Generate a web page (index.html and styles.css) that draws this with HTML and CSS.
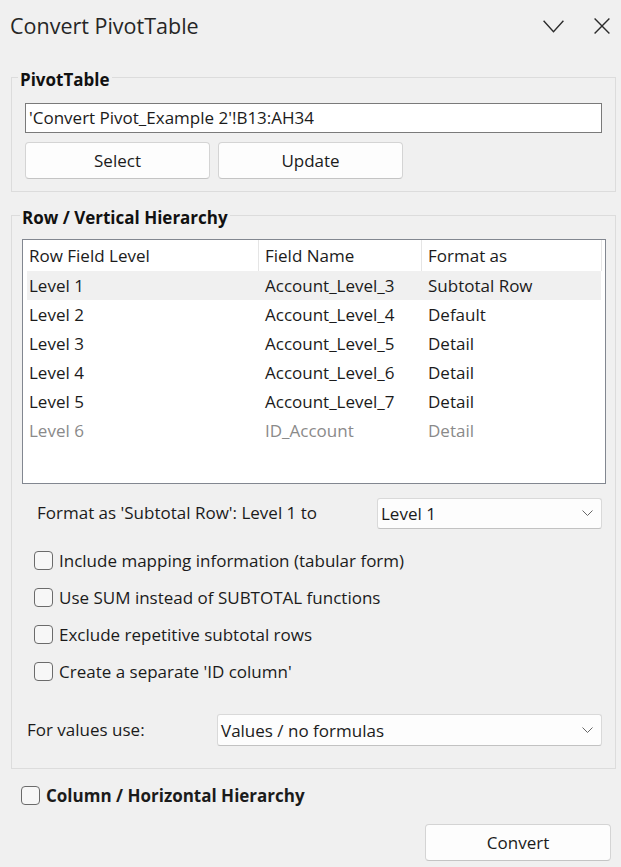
FILE: index.html
```html
<!DOCTYPE html>
<html lang="en">
<head>
<meta charset="utf-8">
<title>Convert PivotTable</title>
<link rel="stylesheet" href="styles.css">
</head>
<body>
<div class="pane">
  <header class="titlebar">
    <h1 class="title">Convert PivotTable</h1>
    <div class="title-actions">
      <svg class="ico ico-chev" width="21" height="13" viewBox="0 0 21 13"><path d="M0.6 0.8 L10.5 11.6 L20.4 0.8" fill="none" stroke="#2b2b2b" stroke-width="1.4"/></svg>
      <svg class="ico ico-close" width="16" height="16" viewBox="0 0 16 16"><path d="M0.6 0.6 L15.4 15.4 M15.4 0.6 L0.6 15.4" fill="none" stroke="#2b2b2b" stroke-width="1.4"/></svg>
    </div>
  </header>

  <fieldset class="group group-pivot">
    <legend class="legend">PivotTable</legend>
    <div class="textbox">'Convert Pivot_Example 2'!B13:AH34</div>
    <div class="btn-row">
      <button class="btn">Select</button>
      <button class="btn">Update</button>
    </div>
  </fieldset>

  <fieldset class="group group-rows">
    <legend class="legend">Row / Vertical Hierarchy</legend>
    <div class="listbox">
      <div class="lv-row lv-head">
        <div class="c1">Row Field Level</div>
        <div class="c2">Field Name</div>
        <div class="c3">Format as</div>
      </div>
      <div class="lv-row sel">
        <div class="c1">Level 1</div><div class="c2">Account_Level_3</div><div class="c3">Subtotal Row</div>
      </div>
      <div class="lv-row">
        <div class="c1">Level 2</div><div class="c2">Account_Level_4</div><div class="c3">Default</div>
      </div>
      <div class="lv-row">
        <div class="c1">Level 3</div><div class="c2">Account_Level_5</div><div class="c3">Detail</div>
      </div>
      <div class="lv-row">
        <div class="c1">Level 4</div><div class="c2">Account_Level_6</div><div class="c3">Detail</div>
      </div>
      <div class="lv-row">
        <div class="c1">Level 5</div><div class="c2">Account_Level_7</div><div class="c3">Detail</div>
      </div>
      <div class="lv-row dim">
        <div class="c1">Level 6</div><div class="c2">ID_Account</div><div class="c3">Detail</div>
      </div>
    </div>

    <div class="subtotal-row">
      <span class="subtotal-label">Format as 'Subtotal Row': Level 1 to</span>
      <div class="combo combo-level"><span>Level 1</span><svg class="chev" width="11" height="7" viewBox="0 0 11 7"><path d="M0.5 0.5 L5.5 5.5 L10.5 0.5" fill="none" stroke="#666" stroke-width="1"/></svg></div>
    </div>

    <div class="checks">
      <label class="check"><span class="box"></span>Include mapping information (tabular form)</label>
      <label class="check"><span class="box"></span>Use SUM instead of SUBTOTAL functions</label>
      <label class="check"><span class="box"></span>Exclude repetitive subtotal rows</label>
      <label class="check"><span class="box"></span>Create a separate 'ID column'</label>
    </div>

    <div class="values-row">
      <span class="values-label">For values use:</span>
      <div class="combo combo-values"><span>Values / no formulas</span><svg class="chev" width="11" height="7" viewBox="0 0 11 7"><path d="M0.5 0.5 L5.5 5.5 L10.5 0.5" fill="none" stroke="#666" stroke-width="1"/></svg></div>
    </div>
  </fieldset>

  <label class="check check-col"><span class="box"></span>Column / Horizontal Hierarchy</label>

  <div class="footer">
    <button class="btn btn-convert">Convert</button>
  </div>
</div>
</body>
</html>
```

FILE: styles.css
```css
* { box-sizing: border-box; }
html, body {
  margin: 0;
  padding: 0;
  background: #f0f0f0;
}
body {
  font-family: "Open Sans", "Noto Sans", "DejaVu Sans", sans-serif;
  font-size: 17px;
  color: #1b1b1b;
  width: 621px;
  height: 867px;
  overflow: hidden;
}
.pane {
  display: flex;
  flex-direction: column;
}
.titlebar {
  height: 63px;
  display: flex;
  align-items: flex-start;
  justify-content: space-between;
  padding: 12px 11px 0 10px;
}
.title {
  margin: 0;
  font-size: 21.5px;
  font-weight: 500;
  line-height: 28px;
  color: #262626;
}
.title-actions {
  display: flex;
  align-items: flex-start;
  gap: 30px;
}
.ico { display: block; }
.ico-chev { margin-top: 8px; }
.ico-close { margin-top: 6px; }

.group {
  margin: 0 5px 0 11px;
  border: 1px solid #dcdcdc;
  padding: 0 13px;
  min-width: 0;
}
.legend {
  font-weight: 700;
  font-size: 17px;
  line-height: 22px;
  padding: 6px 2px 0 2px;
  color: #111;
}
.group-pivot {
  padding-top: 12px;
  padding-bottom: 12px;
}
.group-pivot .legend { margin-left: -7px; }
.textbox {
  height: 30px;
  border: 1px solid #7a7a7a;
  background: #fff;
  padding: 0 3px;
  line-height: 28px;
  white-space: nowrap;
}
.btn-row {
  display: flex;
  gap: 8px;
  margin-top: 9px;
}
.btn {
  width: 185px;
  height: 37px;
  background: #fdfdfd;
  border: 1px solid #d4d4d4;
  border-bottom-color: #c4c4c4;
  border-radius: 4px;
  font-family: inherit;
  font-size: 17px;
  color: #1b1b1b;
  padding: 0;
}

.group-rows {
  margin-top: 9px;
  padding: 10px 9px 22px 10px;
}
.group-rows .legend { margin-left: -2px; }
.listbox {
  height: 245px;
  border: 1px solid #828790;
  background: #fff;
  padding: 0 4px;
}
.lv-row {
  display: grid;
  grid-template-columns: 232px 163px 180px;
  height: 29px;
  white-space: nowrap;
}
.lv-row > div { display: flex; align-items: center; }
.lv-row .c1 { padding-left: 2px; }
.lv-row .c2, .lv-row .c3 { padding-left: 6px; }
.lv-head { height: 31px; }
.lv-head > div { border-right: 1px solid #e5e5e5; }
.sel { background: #f0f0f0; }
.dim { color: #8a8a8a; }

.subtotal-row {
  display: flex;
  justify-content: space-between;
  align-items: center;
  margin-top: 14px;
  padding-left: 15px;
}
.subtotal-label { margin-top: -2px; }
.combo {
  height: 31px;
  background: #fdfdfd;
  border: 1px solid #d9d9d9;
  border-bottom-color: #c2c2c2;
  border-radius: 3px;
  display: flex;
  align-items: center;
  justify-content: space-between;
  padding: 0 8px 0 3px;
  margin-right: 4px;
}
.combo-level { width: 225px; }
.combo-values { width: 385px; height: 32px; }
.chev { display: block; }

.checks {
  display: flex;
  flex-direction: column;
  gap: 17px;
  margin-top: 21px;
  padding-left: 12px;
}
.check {
  display: flex;
  align-items: center;
  gap: 6px;
  height: 20px;
}
.box {
  width: 19px;
  height: 19px;
  border: 1px solid #6b6b6b;
  border-radius: 4px;
  background: #f7f7f7;
  flex: none;
}

.values-row {
  display: flex;
  justify-content: space-between;
  align-items: center;
  margin-top: 33px;
  padding-left: 5px;
}
.values-label { margin-top: -2px; }

.check-col {
  margin: 16px 0 0 21px;
  font-weight: 700;
}
.footer {
  display: flex;
  justify-content: flex-end;
  padding: 19px 10px 0 0;
}
.btn-convert { width: 186px; }
```
